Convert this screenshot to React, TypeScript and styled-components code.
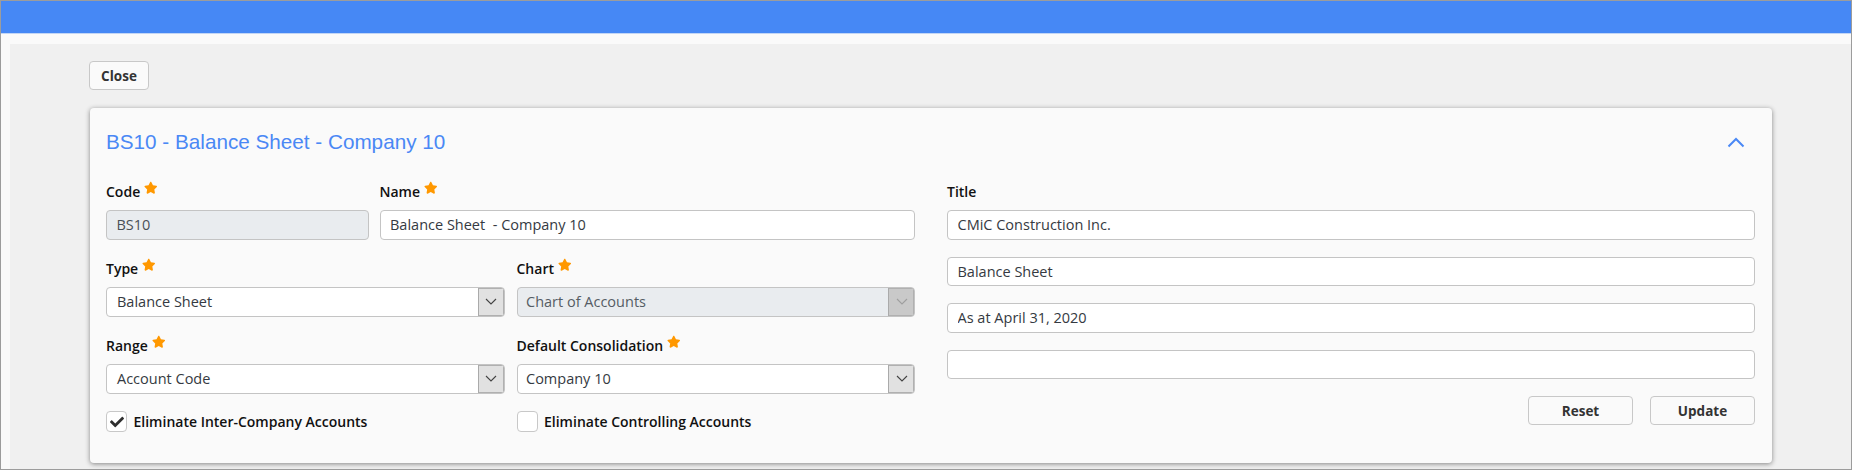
import React from "react";
import styled, { createGlobalStyle } from "styled-components";
import { FaStar, FaCheck } from "react-icons/fa";

const Global = createGlobalStyle`
  html, body { margin: 0; padding: 0; background: #fafafa; }
  * { box-sizing: border-box; }
  body { font-family: "Open Sans", "Noto Sans", sans-serif; }
`;

const Frame = styled.div`
  width: 1852px;
  height: 470px;
  border: 1px solid #9c9c9c;
  background: #fafafa;
  display: flex;
  flex-direction: column;
  overflow: hidden;
`;
const TopBar = styled.div`
  height: 33px;
  flex: none;
  background: #4688f5;
  border-bottom: 1px solid #c3d6f5;
`;
const Content = styled.div`
  flex: 1;
  margin: 10px 0 0 9px;
  padding: 17px 78px 0 79px;
  background: #f0f0f0;
  overflow: hidden;
`;
const Btn = styled.button`
  height: 29px;
  padding: 0;
  background: #fafafa;
  border: 1px solid #c8c8c8;
  border-radius: 4px;
  color: #333;
  font: 700 13.5px "Open Sans", sans-serif;
  cursor: pointer;
`;
const CloseBtn = styled(Btn)`
  display: block;
  width: 60px;
  margin-bottom: 18px;
`;
const Panel = styled.section`
  height: 355px;
  margin: 0 1px;
  background: #fafafa;
  border-radius: 4px;
  padding: 0 16px;
  box-shadow: 0 1px 5px rgba(0, 0, 0, 0.45);
`;
const Header = styled.header`
  height: 72px;
  display: flex;
  align-items: flex-start;
  justify-content: space-between;
  padding-top: 21px;
`;
const PanelTitle = styled.h2`
  margin: 0;
  font: 400 20.7px/26px "Liberation Sans", Arial, sans-serif;
  color: #4a88f5;
`;
const Collapse = styled.button`
  border: 0;
  padding: 0;
  margin: 8px 11px 0 0;
  background: none;
  line-height: 0;
  width: 18px;
  height: 11px;
`;
const Columns = styled.div`
  display: grid;
  grid-template-columns: 809px 808px;
  column-gap: 32px;
`;
const LeftForm = styled.div`
  display: grid;
  grid-template-columns: repeat(2, 398.5px);
  column-gap: 12px;
  row-gap: 17.5px;
`;
const TopRow = styled.div`
  grid-column: 1 / -1;
  display: grid;
  grid-template-columns: 263px 535.5px;
  column-gap: 10.5px;
`;
const Field = styled.div`
  display: flex;
  flex-direction: column;
  min-width: 0;
`;
const Label = styled.label`
  height: 30px;
  padding-top: 2px;
  display: flex;
  align-items: flex-start;
  font: 600 14px/20px "Open Sans", sans-serif;
  color: #111;
`;
const Star = styled(FaStar)`
  width: 13.5px;
  height: 13.5px;
  margin: -1px 0 0 4px;
  color: #ff9800;
`;
const TextInput = styled.input`
  display: block;
  width: 100%;
  height: 29.5px;
  padding: 0 9.5px;
  border: 1px solid #c4c4c4;
  border-radius: 4px;
  background: ${(p) => (p.disabled ? "#e9ecef" : "#fff")};
  color: #353a42;
  font: 400 14.5px "Open Sans", sans-serif;
  outline: none;
  &:disabled { opacity: 1; -webkit-text-fill-color: #495057; }
`;
const SelectBox = styled.div<{ $off?: boolean }>`
  height: 29.5px;
  display: flex;
  align-items: stretch;
  border: 1px solid #c4c4c4;
  border-radius: 4px;
  overflow: hidden;
  background: ${(p) => (p.$off ? "#e9ecef" : "#fff")};
`;
const SelectValue = styled.span<{ $off?: boolean; $inset?: boolean }>`
  flex: 1;
  padding-left: ${(p) => (p.$inset ? 8.5 : 10)}px;
  line-height: 27.5px;
  font-size: 14.5px;
  color: ${(p) => (p.$off ? "#555c64" : "#353a42")};
`;
const SelectArrow = styled.span<{ $off?: boolean }>`
  width: 26px;
  flex: none;
  display: flex;
  align-items: center;
  justify-content: center;
  background: ${(p) => (p.$off ? "#c9c9c9" : "#e1e1e1")};
  border-left: 1px solid #aaaaaa;
  box-shadow: inset -1px -1px 0 #b0b0b0, inset 0 1px 0 #b0b0b0;
`;
const CheckRow = styled.label`
  display: flex;
  align-items: center;
  gap: 6.5px;
  height: 21px;
  font: 600 14px "Open Sans", sans-serif;
  color: #111;
`;
const CheckBox = styled.span`
  width: 21px;
  height: 21px;
  flex: none;
  display: flex;
  align-items: center;
  justify-content: center;
  background: #fff;
  border: 1px solid #c8c8c8;
  border-radius: 4px;
  color: #2f2f2f;
`;
const RightForm = styled.div`
  display: flex;
  flex-direction: column;
  gap: 17px;
`;
const Actions = styled.div`
  display: flex;
  justify-content: flex-end;
  gap: 17px;
`;
const ActionBtn = styled(Btn)`
  width: 105px;
`;

const Chevron = ({ color }: { color: string }) => (
  <svg width="12" height="7" viewBox="0 0 12 7" fill="none">
    <polyline points="1,1 6,6 11,1" stroke={color} strokeWidth="1.1" />
  </svg>
);

const Select = ({ value, off, inset }: { value: string; off?: boolean; inset?: boolean }) => (
  <SelectBox $off={off}>
    <SelectValue $off={off} $inset={inset}>{value}</SelectValue>
    <SelectArrow $off={off}>
      <Chevron color={off ? "#9f9f9f" : "#444"} />
    </SelectArrow>
  </SelectBox>
);

const Req = ({ children }: { children: React.ReactNode }) => (
  <Label>
    {children}
    <Star />
  </Label>
);

export default function App() {
  return (
    <Frame>
      <Global />
      <TopBar />
      <Content>
        <CloseBtn>Close</CloseBtn>
        <Panel>
          <Header>
            <PanelTitle>BS10 - Balance Sheet - Company 10</PanelTitle>
            <Collapse aria-label="Collapse">
              <svg width="18" height="11" viewBox="0 0 18 11" fill="none">
                <polyline points="1.5,9.5 9,2 16.5,9.5" stroke="#4a88f5" strokeWidth="2" />
              </svg>
            </Collapse>
          </Header>
          <Columns>
            <LeftForm>
              <TopRow>
                <Field>
                  <Req>Code</Req>
                  <TextInput disabled value="BS10" readOnly />
                </Field>
                <Field>
                  <Req>Name</Req>
                  <TextInput value="Balance Sheet  - Company 10" readOnly />
                </Field>
              </TopRow>
              <Field>
                <Req>Type</Req>
                <Select value="Balance Sheet" />
              </Field>
              <Field>
                <Req>Chart</Req>
                <Select value="Chart of Accounts" off inset />
              </Field>
              <Field>
                <Req>Range</Req>
                <Select value="Account Code" />
              </Field>
              <Field>
                <Req>Default Consolidation</Req>
                <Select value="Company 10" inset />
              </Field>
              <CheckRow>
                <CheckBox><FaCheck size={14} /></CheckBox>
                Eliminate Inter-Company Accounts
              </CheckRow>
              <CheckRow>
                <CheckBox />
                Eliminate Controlling Accounts
              </CheckRow>
            </LeftForm>
            <RightForm>
              <Field>
                <Label>Title</Label>
                <TextInput value="CMiC Construction Inc." readOnly />
              </Field>
              <TextInput value="Balance Sheet" readOnly />
              <TextInput value="As at April 31, 2020" readOnly />
              <TextInput value="" readOnly />
              <Actions>
                <ActionBtn>Reset</ActionBtn>
                <ActionBtn>Update</ActionBtn>
              </Actions>
            </RightForm>
          </Columns>
        </Panel>
      </Content>
    </Frame>
  );
}
